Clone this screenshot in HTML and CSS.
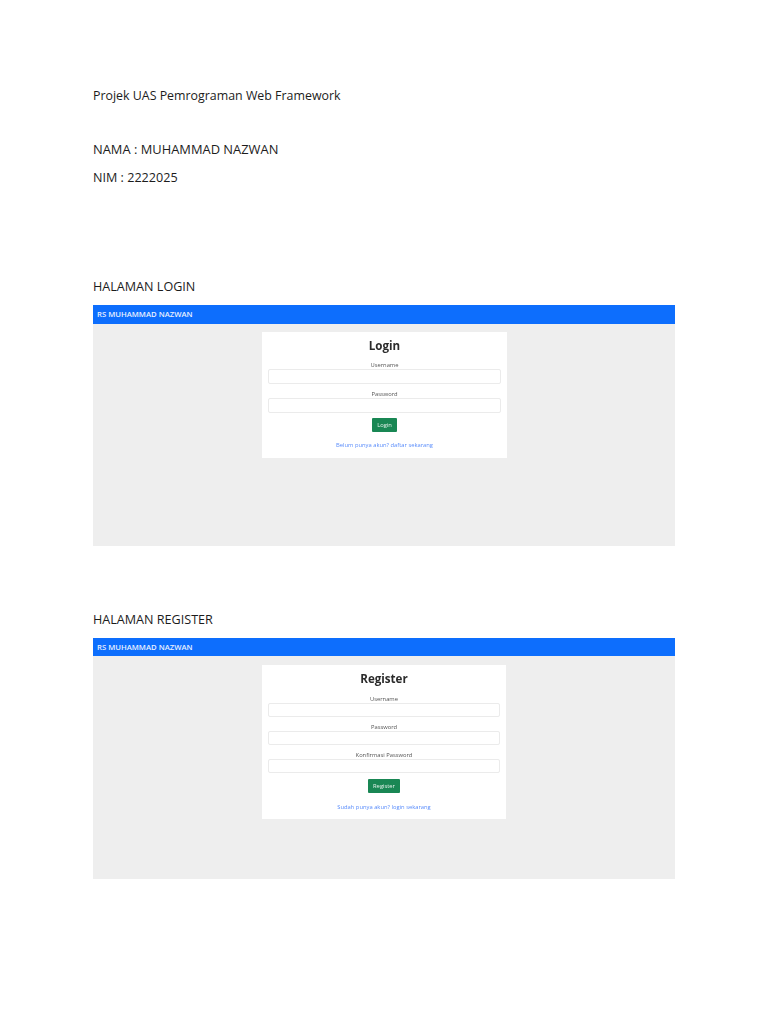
FILE: index.html
```html
<!DOCTYPE html>
<html lang="en">
  <head>
    <meta charset="UTF-8" />
    <title>Projek UAS Pemrograman Web Framework</title>
    <link rel="stylesheet" href="styles.css">
  </head>
  <body>
    <div class="page">
      <p class="doc-title">Projek UAS Pemrograman Web Framework</p>
      <p class="doc-name">NAMA : MUHAMMAD NAZWAN</p>
      <p class="doc-nim">NIM : 2222025</p>

      <p class="doc-heading">HALAMAN LOGIN</p>
      <div class="shot">
        <div class="navbar">RS MUHAMMAD NAZWAN</div>
        <div class="card">
          <h2>Login</h2>
          <div class="field">
            <label>Username</label>
            <div class="input"></div>
          </div>
          <div class="field">
            <label>Password</label>
            <div class="input"></div>
          </div>
          <div class="btn">Login</div>
          <a class="link">Belum punya akun? daftar sekarang</a>
        </div>
      </div>

      <p class="doc-heading doc-heading-second">HALAMAN REGISTER</p>
      <div class="shot shot-register">
        <div class="navbar">RS MUHAMMAD NAZWAN</div>
        <div class="card">
          <h2>Register</h2>
          <div class="field">
            <label>Username</label>
            <div class="input"></div>
          </div>
          <div class="field">
            <label>Password</label>
            <div class="input"></div>
          </div>
          <div class="field">
            <label>Konfirmasi Password</label>
            <div class="input"></div>
          </div>
          <div class="btn">Register</div>
          <a class="link">Sudah punya akun? login sekarang</a>
        </div>
      </div>
    </div>
  </body>
</html>
```

FILE: styles.css
```css
body {
  font-family: "Open Sans", "Noto Sans", sans-serif;
  margin: 0;
  padding: 0;
  background: #fff;
  color: #1c1c1c;
}

.page {
  width: 582px;
  margin-left: 93px;
  padding-top: 87px;
}

p {
  margin: 0;
  font-size: 12.6px;
  line-height: 18px;
}

.doc-title {
  font-size: 12.4px;
}

.doc-name {
  margin-top: 35px;
  font-size: 12.9px;
}

.doc-nim {
  margin-top: 11px;
}

.doc-heading {
  margin-top: 91px;
}

.doc-heading-second {
  margin-top: 65px;
}

.shot {
  margin-top: 9px;
  height: 241px;
  background: #eeeeee;
  overflow: hidden;
}

.navbar {
  height: 19px;
  line-height: 18px;
  padding-left: 4px;
  background: #0d6efd;
  color: #e8f0ff;
  font-size: 7.7px;
  font-weight: 600;
}

.card {
  width: 245px;
  height: 126px;
  margin: 8px 0 0 169px;
  padding: 5px 6px 0;
  box-sizing: border-box;
  background: #fff;
  text-align: center;
  filter: blur(0.3px);
}

h2 {
  margin: 0;
  font-size: 11.6px;
  line-height: 17px;
  font-weight: 700;
  color: #2b2b2b;
}

.field {
  margin-top: 7px;
}

.field + .field {
  margin-top: 6.5px;
}

label {
  display: block;
  font-size: 5.8px;
  line-height: 8px;
  color: #555;
}

.input {
  height: 12.5px;
  border: 1px solid #ebebeb;
  border-radius: 2px;
  background: #fff;
}

.btn {
  width: fit-content;
  margin: 5px auto 0;
  padding: 0 5.5px;
  height: 14px;
  line-height: 14px;
  border-radius: 1px;
  background: #198754;
  color: #e6f2ec;
  font-size: 5.8px;
}

.link {
  display: block;
  margin-top: 9px;
  font-size: 5.8px;
  line-height: 9px;
  color: #5a8dfb;
}

.shot-register .navbar {
  height: 18px;
}

.shot-register .card {
  width: 244px;
  height: 154px;
  margin-top: 9px;
}

.shot-register .field {
  margin-top: 8px;
}

.shot-register .field + .field {
  margin-top: 6px;
}

.shot-register .input {
  height: 12px;
}

.shot-register .btn {
  margin-top: 6px;
}

.shot-register .link {
  margin-top: 9.5px;
}
```
